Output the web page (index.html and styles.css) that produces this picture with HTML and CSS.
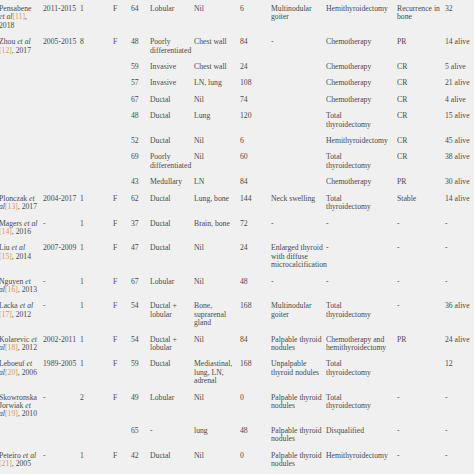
FILE: index.html
```html
<!DOCTYPE html>
<html>
<head>
<meta charset="utf-8">
<link rel="stylesheet" href="styles.css">
</head>
<body>
<table class="cases">
<colgroup>
<col class="c1"><col class="c2"><col class="c3"><col class="c4"><col class="c5"><col class="c6"><col class="c7"><col class="c8"><col class="c9"><col class="c10"><col class="c11"><col class="c12">
</colgroup>
<tbody>
<tr><td>Pensabene<br><i>et al</i><span class="ref">[11]</span>,<br>2018</td><td>2011-2015</td><td>1</td><td>F</td><td>64</td><td>Lobular</td><td>Nil</td><td>6</td><td>Multinodular<br>goiter</td><td>Hemithyroidectomy</td><td>Recurrence in<br>bone</td><td>32</td></tr>
<tr><td>Zhou <i>et al</i><br><span class="ref">[12]</span>, 2017</td><td>2005-2015</td><td>8</td><td>F</td><td>48</td><td>Poorly<br>differentiated</td><td>Chest wall</td><td>84</td><td>-</td><td>Chemotherapy</td><td>PR</td><td>14 alive</td></tr>
<tr><td></td><td></td><td></td><td></td><td>59</td><td>Invasive</td><td>Chest wall</td><td>24</td><td></td><td>Chemotherapy</td><td>CR</td><td>5 alive</td></tr>
<tr><td></td><td></td><td></td><td></td><td>57</td><td>Invasive</td><td>LN, lung</td><td>108</td><td></td><td>Chemotherapy</td><td>CR</td><td>21 alive</td></tr>
<tr><td></td><td></td><td></td><td></td><td>67</td><td>Ductal</td><td>Nil</td><td>74</td><td></td><td>Chemotherapy</td><td>CR</td><td>4 alive</td></tr>
<tr><td></td><td></td><td></td><td></td><td>48</td><td>Ductal</td><td>Lung</td><td>120</td><td></td><td>Total<br>thyroidectomy</td><td>CR</td><td>15 alive</td></tr>
<tr><td></td><td></td><td></td><td></td><td>52</td><td>Ductal</td><td>Nil</td><td>6</td><td></td><td>Hemithyroidectomy</td><td>CR</td><td>45 alive</td></tr>
<tr><td></td><td></td><td></td><td></td><td>69</td><td>Poorly<br>differentiated</td><td>Nil</td><td>60</td><td></td><td>Total<br>thyroidectomy</td><td>CR</td><td>38 alive</td></tr>
<tr><td></td><td></td><td></td><td></td><td>43</td><td>Medullary</td><td>LN</td><td>84</td><td></td><td>Chemotherapy</td><td>PR</td><td>30 alive</td></tr>
<tr><td>Plonczak <i>et</i><br><i>al</i><span class="ref">[13]</span>, 2017</td><td>2004-2017</td><td>1</td><td>F</td><td>62</td><td>Ductal</td><td>Lung, bone</td><td>144</td><td>Neck swelling</td><td>Total<br>thyroidectomy</td><td>Stable</td><td>14 alive</td></tr>
<tr><td>Magers <i>et al</i><br><span class="ref">[14]</span>, 2016</td><td>-</td><td>1</td><td>F</td><td>37</td><td>Ductal</td><td>Brain, bone</td><td>72</td><td>-</td><td>-</td><td>-</td><td>-</td></tr>
<tr><td>Liu <i>et al</i><br><span class="ref">[15]</span>, 2014</td><td>2007-2009</td><td>1</td><td>F</td><td>47</td><td>Ductal</td><td>Nil</td><td>24</td><td>Enlarged thyroid<br>with diffuse<br>microcalcification</td><td>-</td><td>-</td><td>-</td></tr>
<tr><td>Nguyen <i>et</i><br><i>al</i><span class="ref">[16]</span>, 2013</td><td>-</td><td>1</td><td>F</td><td>67</td><td>Lobular</td><td>Nil</td><td>48</td><td>-</td><td>-</td><td>-</td><td>-</td></tr>
<tr><td>Lacka <i>et al</i><br><span class="ref">[17]</span>, 2012</td><td>-</td><td>1</td><td>F</td><td>54</td><td>Ductal +<br>lobular</td><td>Bone,<br>suprarenal<br>gland</td><td>168</td><td>Multinodular<br>goiter</td><td>Total<br>thyroidectomy</td><td>-</td><td>36 alive</td></tr>
<tr><td>Kolarevic <i>et</i><br><i>al</i><span class="ref">[18]</span>, 2012</td><td>2002-2011</td><td>1</td><td>F</td><td>54</td><td>Ductal +<br>lobular</td><td>Nil</td><td>84</td><td>Palpable thyroid<br>nodules</td><td>Chemotherapy and<br>hemithyroidectomy</td><td>PR</td><td>24 alive</td></tr>
<tr><td>Leboeuf <i>et</i><br><i>al</i><span class="ref">[20]</span>, 2006</td><td>1989-2005</td><td>1</td><td>F</td><td>59</td><td>Ductal</td><td>Mediastinal,<br>lung, LN,<br>adrenal</td><td>168</td><td>Unpalpable<br>thyroid nodules</td><td>Total<br>thyroidectomy</td><td></td><td>12</td></tr>
<tr><td>Skowronska<br>Jorwiak <i>et</i><br><i>al</i><span class="ref">[19]</span>, 2010</td><td>-</td><td>2</td><td>F</td><td>49</td><td>Lobular</td><td>Nil</td><td>0</td><td>Palpable thyroid<br>nodules</td><td>Total<br>thyroidectomy</td><td>-</td><td>-</td></tr>
<tr><td></td><td></td><td></td><td></td><td>65</td><td>-</td><td>lung</td><td>48</td><td>Palpable thyroid<br>nodules</td><td>Disqualified</td><td>-</td><td>-</td></tr>
<tr><td>Peteiro <i>et al</i><br><span class="ref">[21]</span>, 2005</td><td>-</td><td>1</td><td>F</td><td>42</td><td>Ductal</td><td>Nil</td><td>0</td><td>Palpable thyroid<br>nodules</td><td>Hemithyroidectomy</td><td>-</td><td>-</td></tr>
</tbody>
</table>
</body>
</html>
```
FILE: styles.css
```css
html, body {
  margin: 0;
  padding: 0;
  background: #f0f0f0;
  overflow: hidden;
}
.cases {
  table-layout: fixed;
  border-collapse: collapse;
  width: 476px;
  margin: 1px 0 0 -1px;
  font-family: "Liberation Serif", "Times New Roman", serif;
  font-size: 7.7px;
  line-height: 8.4px;
  color: #4a4a4a;
}
.cases td {
  padding: 4px 0;
  vertical-align: top;
  white-space: nowrap;
}
.ref { color: #d9965a; }
.c1 { width: 44px; }
.c2 { width: 37px; }
.c3 { width: 33px; }
.c4 { width: 18px; }
.c5 { width: 19px; }
.c6 { width: 44px; }
.c7 { width: 46px; }
.c8 { width: 31px; }
.c9 { width: 55px; }
.c10 { width: 71px; }
.c11 { width: 48px; }
.c12 { width: 30px; }
```
